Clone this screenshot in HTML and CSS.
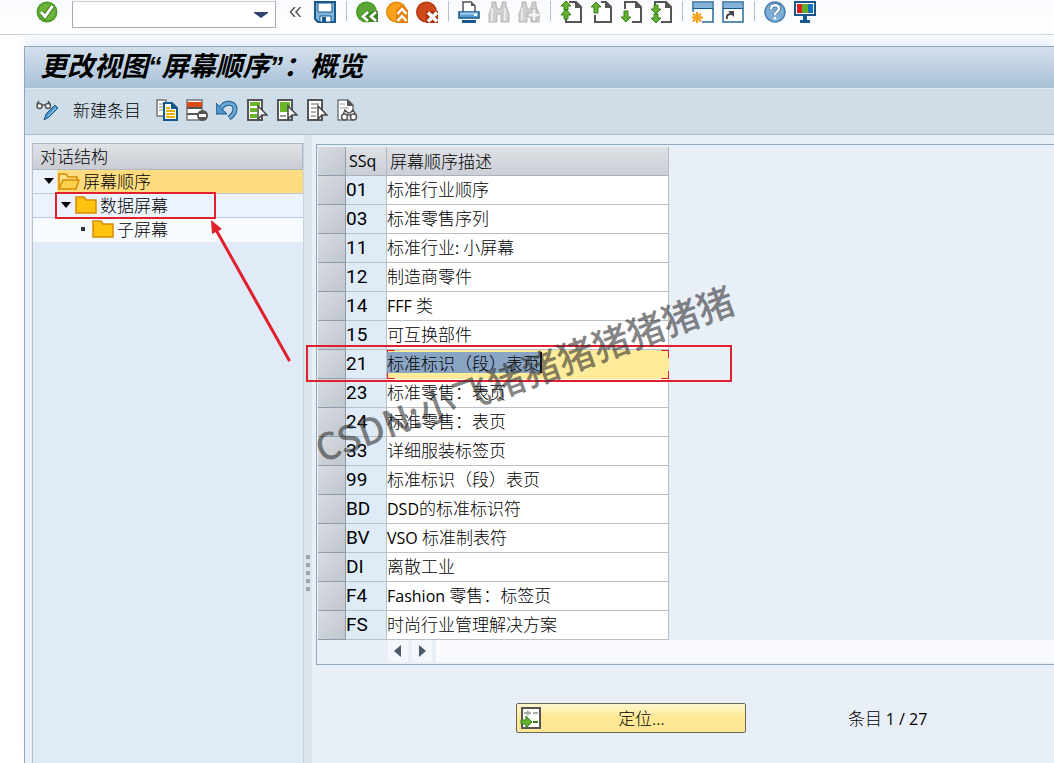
FILE: index.html
```
<!DOCTYPE html>
<html lang="zh-CN">
<head>
    <meta charset="UTF-8">
    <title>更改视图“屏幕顺序”：概览</title>
    <link rel="stylesheet" href="styles.css">
</head>

<body>
<!-- 系统工具栏 -->
<div class="sysbar">
    <button class="icon" aria-label="回车"><svg viewBox="0 0 22 22"><circle cx="11" cy="11" r="10.5" fill="#4f9e2b"/><circle cx="11" cy="11" r="8.5" fill="#6cb43a"/><path d="M5 11l4 4.500L16.500 5" fill="none" stroke="#3f7f22" stroke-width="5"/><path d="M5 11l4 4.500L16.500 5" fill="none" stroke="#fff" stroke-width="3"/></svg></button>
    <div class="command">
        <input type="text" aria-label="命令">
        <button aria-label="历史"><svg viewBox="0 0 14 8"><path d="M0 1h14v1l-7 5-7-5z" fill="#2e4372"/></svg></button>
    </div>
    <button class="fold" aria-label="收起"><svg viewBox="0 0 12 10"><path d="M6 0L1.500 5 6 10M11.500 0L7 5l4.500 5" fill="none" stroke="#555" stroke-width="1.500"/></svg></button>
    <button class="icon" aria-label="保存"><svg viewBox="0 0 22 22"><path d="M1 1h20v20H4l-3-3z" fill="#7fb2dc" stroke="#17588a" stroke-width="2"/><path d="M4 2h14v9H4z" fill="#fff" stroke="#17588a"/><path d="M6 15h11v6H6z" fill="#fff" stroke="#17588a"/><path d="M8 16h4v5H8z" fill="#17588a"/></svg></button>
    <i class="sep"></i>
    <button class="icon" aria-label="返回"><svg viewBox="0 0 22 22"><circle cx="10.500" cy="11" r="10.500" fill="#4c9a2a"/><circle cx="10.500" cy="11" r="9" fill="#5ba535"/><path d="M5 15l6-5v3l5-3h6v11H11z" fill="#3f8423"/><path d="M12 11l-5 4.500 5 4.500M20 11l-5 4.500 5 4.500" fill="none" stroke="#fff" stroke-width="2.500"/></svg></button>
    <button class="icon" aria-label="退出"><svg viewBox="0 0 22 22"><circle cx="10.500" cy="11" r="10.500" fill="#e08a12"/><circle cx="10.500" cy="11" r="9" fill="#f9a11b"/><path d="M10 9l6-5 6 5v13H10z" fill="#e3810c"/><path d="M11.500 13l4.500-5 4.500 5M11.500 20l4.500-5 4.500 5" fill="none" stroke="#fff" stroke-width="2.500"/></svg></button>
    <button class="icon" aria-label="取消"><svg viewBox="0 0 22 22"><circle cx="10.500" cy="11" r="10.500" fill="#b53a12"/><circle cx="10.500" cy="11" r="9" fill="#cf4a1a"/><path d="M10 10h12v12H10z" fill="#a9340f"/><path d="M12 11.500l9 9M21 11.500l-9 9" stroke="#fff" stroke-width="3.500"/></svg></button>
    <i class="sep"></i>
    <button class="icon" aria-label="打印"><svg viewBox="0 0 22 22"><path d="M5 11V1h8l4 4v6" fill="#fff" stroke="#555" stroke-width="1.500"/><path d="M13 1v4h4z" fill="#555"/><path d="M1 11h20v6H1z" fill="#5d9fd0" stroke="#17588a" stroke-width="1.500"/><path d="M2 11.500h18v2H2z" fill="#a9d0ee"/><path d="M16 13h3v2h-3z" fill="#fff"/><path d="M4 19h14v3H4z" fill="#17588a"/></svg></button>
    <button class="icon" aria-label="查找"><svg viewBox="0 0 22 22"><path d="M4 1h4v4h1v3h4V5h1V1h4v4l3 8v8h-8v-8H9v8H1v-8l3-8z" fill="#d0d0d0" stroke="#b4b4b4"/><path d="M4 7v13M17 7v13" stroke="#e9e9e9" stroke-width="2"/></svg></button>
    <button class="icon" aria-label="继续查找"><svg viewBox="0 0 22 22"><path d="M4 1h4v4h1v3h4V5h1V1h4v4l3 8v8h-8v-8H9v8H1v-8l3-8z" fill="#d0d0d0" stroke="#b4b4b4"/><path d="M4 7v13" stroke="#e9e9e9" stroke-width="2"/><path d="M14 8h4v4h4v4h-4v4h-4v-4h-4v-4h4z" fill="#f4f4f4" stroke="#b4b4b4"/></svg></button>
    <i class="sep"></i>
    <button class="icon" aria-label="首页"><svg viewBox="0 0 22 22"><path d="M9 1h7l5 5v15H6v-4" fill="#fff" stroke="#555" stroke-width="2"/><path d="M15 0l7 7h-7z" fill="#555"/><path d="M6 0l5 5H8v4H4V5H1zM6 8l5 6H8v4H4v-4H1z" fill="#62b22f" stroke="#3c7f1c"/></svg></button>
    <button class="icon" aria-label="上一页"><svg viewBox="0 0 22 22"><path d="M11 1h5l5 5v15H5v-7" fill="#fff" stroke="#555" stroke-width="2"/><path d="M15 0l7 7h-7z" fill="#555"/><path d="M6 1l5 5H8v6H4V6H1z" fill="#62b22f" stroke="#3c7f1c"/></svg></button>
    <button class="icon" aria-label="下一页"><svg viewBox="0 0 22 22"><path d="M5 8V1h11l5 5v15h-9" fill="#fff" stroke="#555" stroke-width="2"/><path d="M15 0l7 7h-7z" fill="#555"/><path d="M6 21l5-5H8v-6H4v6H1z" fill="#62b22f" stroke="#3c7f1c"/></svg></button>
    <button class="icon" aria-label="末页"><svg viewBox="0 0 22 22"><path d="M5 4V1h11l5 5v15H11" fill="#fff" stroke="#555" stroke-width="2"/><path d="M15 0l7 7h-7z" fill="#555"/><path d="M6 13l5-5H8V4H4v4H1zM6 22l5-5H8v-4H4v4H1z" fill="#62b22f" stroke="#3c7f1c"/></svg></button>
    <i class="sep"></i>
    <button class="icon" aria-label="新建会话"><svg viewBox="0 0 22 22"><path d="M1 1h20v20H1z" fill="#fff" stroke="#2a6a98" stroke-width="1.500"/><path d="M2 2h18v5H2z" fill="#86b3da"/><path d="M1 7.500h20" stroke="#17588a"/><path d="M0 11h10v11H0z" fill="#fff"/><path d="M5 11v11M0 16.500h11M1 12.500l8 8M9 12.500l-8 8" stroke="#f09a12" stroke-width="2"/><circle cx="5" cy="16.500" r="3" fill="#f5a623"/></svg></button>
    <button class="icon" aria-label="生成快捷方式"><svg viewBox="0 0 22 22"><path d="M1 1h20v20H1z" fill="#fff" stroke="#2a6a98" stroke-width="1.500"/><path d="M2 2h18v5H2z" fill="#86b3da"/><path d="M1 7.500h20" stroke="#17588a"/><path d="M5 18c-1-4 1-5 5-5" fill="none" stroke="#444" stroke-width="2"/><path d="M6 10h6v6z" fill="#444"/></svg></button>
    <i class="sep"></i>
    <button class="icon" aria-label="帮助"><svg viewBox="0 0 22 22"><circle cx="11" cy="11" r="10" fill="#7caed6" stroke="#4a7fae" stroke-width="1.500"/><path d="M7 8c0-5 8-5 8-.500 0 3-4 3-4 6.500" fill="none" stroke="#39668f" stroke-width="4"/><path d="M7 8c0-5 8-5 8-.500 0 3-4 3-4 6.500M11 16v2.500" fill="none" stroke="#fff" stroke-width="2.500"/></svg></button>
    <button class="icon" aria-label="定制本地布局"><svg viewBox="0 0 22 22"><path d="M1 1h20v13H1z" fill="#fff" stroke="#17588a" stroke-width="2"/><path d="M3 3h5v9H3z" fill="#dd1c1c"/><path d="M8 3h6v9H8z" fill="#5fae2c"/><path d="M14 3h5v9h-5z" fill="#1a70c0"/><path d="M9 15h4v4h3v3H6v-3h3z" fill="#17588a"/></svg></button>
</div>

<div class="window">
    <h1 class="title">更改视图“屏幕顺序”：概览</h1>

    <!-- 应用工具栏 -->
    <div class="appbar">
        <button class="icon" aria-label="显示/更改"><svg viewBox="0 0 22 22"><g fill="#fff" stroke="#555" stroke-width="1.500"><circle cx="3.500" cy="7" r="2.500"/><circle cx="12" cy="7" r="2.500"/><path d="M1 5l2-3M6 6h3M14 5l-2-3" fill="none"/></g><path d="M8 21l2-6 9-9 3 3-9 9z" fill="#4f93c8" stroke="#17588a"/><path d="M12 17l8-8" stroke="#a9d0ee"/></svg></button>
        <button class="text">新建条目</button>
        <button class="icon" aria-label="复制为"><svg viewBox="0 0 22 22"><path d="M1 1h9v16H1z" fill="#fff" stroke="#777" stroke-width="1.500"/><path d="M3 5h4M3 8h4M3 11h4" stroke="#888"/><path d="M8 4h8l5 5v12H8z" fill="#fff" stroke="#17588a" stroke-width="2"/><path d="M15 3l7 7h-7z" fill="#17588a"/><path d="M10 9h4M10 12h9M10 15h9M10 18h9" stroke="#f0b400" stroke-width="2"/></svg></button>
        <button class="icon" aria-label="删除"><svg viewBox="0 0 22 22"><path d="M1 1h15v20H1z" fill="#fff" stroke="#777" stroke-width="1.500"/><path d="M1 3h15v5H1z" fill="#dc4a17"/><path d="M1 9h15M1 15h15" stroke="#555" stroke-width="2"/><circle cx="16.500" cy="16.500" r="5.500" fill="#555"/><path d="M13 15h7v3h-7z" fill="#fff"/></svg></button>
        <button class="icon" aria-label="撤消"><svg viewBox="0 0 22 22"><path d="M5 9c4-7 14-6 14 1 0 4-3 7-6 9" fill="none" stroke="#17588a" stroke-width="5"/><path d="M0 4v11h11z" fill="#4f93c8" stroke="#17588a"/><path d="M5 9c4-7 14-6 14 1 0 4-3 7-6 9" fill="none" stroke="#6aa9d8" stroke-width="3"/></svg></button>
        <button class="icon" aria-label="全选"><svg viewBox="0 0 22 22"><path d="M2 1h14v20H2z" fill="#fff" stroke="#555" stroke-width="2"/><path d="M4 3h10v4H4zM4 9h7v4H4zM4 15h7v4H4z" fill="#6cb52d"/><path d="M12 7l9 9h-5l-4 4z" fill="#fff" stroke="#444" stroke-width="1.500"/></svg></button>
        <button class="icon" aria-label="选择块"><svg viewBox="0 0 22 22"><path d="M2 1h14v20H2z" fill="#fff" stroke="#555" stroke-width="2"/><path d="M4 3h10v10H4z" fill="#6cb52d"/><path d="M4 17h6" stroke="#999" stroke-width="2"/><path d="M12 7l9 9h-5l-4 4z" fill="#fff" stroke="#444" stroke-width="1.500"/></svg></button>
        <button class="icon" aria-label="取消全选"><svg viewBox="0 0 22 22"><path d="M2 1h14v20H2z" fill="#fff" stroke="#555" stroke-width="2"/><path d="M5 5h8M5 9h6M5 13h5M5 17h5" stroke="#999" stroke-width="1.500"/><path d="M12 7l9 9h-5l-4 4z" fill="#fff" stroke="#444" stroke-width="1.500"/></svg></button>
        <button class="icon" aria-label="打印字段"><svg viewBox="0 0 22 22"><path d="M2 21V1h10l5 5v15z" fill="#fff" stroke="#777" stroke-width="1.500"/><path d="M11 0l7 7h-7z" fill="#555"/><path d="M4 5h5M4 9h9" stroke="#999"/><g fill="#fff" stroke="#555" stroke-width="1.500"><path d="M7 16l2-5 3 3h2l3-3 3 5z"/><circle cx="8.500" cy="18" r="3"/><circle cx="17.500" cy="18" r="3"/></g></svg></button>
    </div>

    <div class="content">
        <!-- 对话结构树 -->
        <div class="tree">
            <div class="tree-head">对话结构</div>
            <div class="node current">
                <i class="open"></i>
                <a href="#"><svg class="folder" viewBox="0 0 22 18"><path d="M1 17V2h7l2 3h9v3" fill="#ffe08a" stroke="#d98a00" stroke-width="1.500"/><path d="M1 17L5 8h16l-3 9z" fill="#ffcf4d" stroke="#d98a00" stroke-width="1.500"/></svg>屏幕顺序</a>
            </div>
            <div class="node level2">
                <i class="open"></i>
                <a href="#"><svg class="folder" viewBox="0 0 22 18"><path d="M1 1h8l2 3h10v13H1z" fill="#ffc20e" stroke="#d98a00" stroke-width="1.500"/></svg>数据屏幕</a>
            </div>
            <div class="node level3">
                <i class="leaf"></i>
                <a href="#"><svg class="folder" viewBox="0 0 22 18"><path d="M1 1h8l2 3h10v13H1z" fill="#ffc20e" stroke="#d98a00" stroke-width="1.500"/></svg>子屏幕</a>
            </div>
        </div>

        <div class="splitter"><i></i><i></i><i></i><i></i><i></i></div>

        <div class="main">
            <div class="panel">
                <table>
                    <thead>
                    <tr><th class="pick"><button aria-label="全选"></button></th><th class="latin">SSq</th><th>屏幕顺序描述</th></tr>
                    </thead>
                    <tbody>
                    <tr><td class="pick"><button aria-label="选择 01"></button></td><td class="code">01</td><td>标准行业顺序</td></tr>
                    <tr><td class="pick"><button aria-label="选择 03"></button></td><td class="code">03</td><td>标准零售序列</td></tr>
                    <tr><td class="pick"><button aria-label="选择 11"></button></td><td class="code">11</td><td>标准行业<span class="latin">: </span>小屏幕</td></tr>
                    <tr><td class="pick"><button aria-label="选择 12"></button></td><td class="code">12</td><td>制造商零件</td></tr>
                    <tr><td class="pick"><button aria-label="选择 14"></button></td><td class="code">14</td><td><span class="latin">FFF </span>类</td></tr>
                    <tr><td class="pick"><button aria-label="选择 15"></button></td><td class="code">15</td><td>可互换部件</td></tr>
                    <tr><td class="pick"><button aria-label="选择 21"></button></td><td class="code">21</td><td class="focus"><span class="selected">标准标识（段）表页</span></td></tr>
                    <tr><td class="pick"><button aria-label="选择 23"></button></td><td class="code">23</td><td>标准零售：表页</td></tr>
                    <tr><td class="pick"><button aria-label="选择 24"></button></td><td class="code">24</td><td>标准零售：表页</td></tr>
                    <tr><td class="pick"><button aria-label="选择 33"></button></td><td class="code">33</td><td>详细服装标签页</td></tr>
                    <tr><td class="pick"><button aria-label="选择 99"></button></td><td class="code">99</td><td>标准标识（段）表页</td></tr>
                    <tr><td class="pick"><button aria-label="选择 BD"></button></td><td class="code">BD</td><td><span class="latin">DSD</span>的标准标识符</td></tr>
                    <tr><td class="pick"><button aria-label="选择 BV"></button></td><td class="code">BV</td><td><span class="latin">VSO </span>标准制表符</td></tr>
                    <tr><td class="pick"><button aria-label="选择 DI"></button></td><td class="code">DI</td><td>离散工业</td></tr>
                    <tr><td class="pick"><button aria-label="选择 F4"></button></td><td class="code">F4</td><td><span class="latin">Fashion </span>零售：标签页</td></tr>
                    <tr><td class="pick"><button aria-label="选择 FS"></button></td><td class="code">FS</td><td>时尚行业管理解决方案</td></tr>
                    </tbody>
                </table>
                <div class="scroll">
                    <button aria-label="向左"><svg viewBox="0 0 8 12"><path d="M7 0v12L0 6z" fill="#4a5a6c"/></svg></button>
                    <button aria-label="向右"><svg viewBox="0 0 8 12"><path d="M1 0v12l7-6z" fill="#4a5a6c"/></svg></button>
                    <div class="track"></div>
                </div>
            </div>
            <div class="footer">
                <button class="locate"><svg viewBox="0 0 22 22"><path d="M2 1h18v20H2z" fill="#fff" stroke="#555" stroke-width="2"/><path d="M4 6h7M13 6h5" stroke="#aaa" stroke-width="2"/><path d="M7 3l4 3-4 3z" fill="#aaa"/><path d="M13 15h5" stroke="#3c7f1c" stroke-width="2"/><path d="M1 13h5v-4l6 6-6 6v-4H1z" fill="#62b22f" stroke="#3c7f1c"/></svg><span>定位...</span></button>
                <div class="entries">条目 <span class="latin">1 / 27</span></div>
            </div>
        </div>
    </div>
</div>

<!-- 标注 -->
<svg class="marks" width="760" height="400">
    <g fill="none" stroke="#e0202c" stroke-width="2">
        <rect x="56" y="193" width="159" height="25"/>
        <rect x="307" y="346" width="424" height="35"/>
        <path d="M289 360L215 228" stroke-width="3" stroke-linecap="round"/>
    </g>
    <path d="M211 220l11 9-10 5z" fill="#e0202c"/>
</svg>
<div class="watermark">CSDN:小飞猪猪猪猪猪猪猪</div>
</body>
</html>
```

FILE: styles.css
```
*{
    margin: 0;
    padding: 0;
    box-sizing: border-box;
}
body{
    min-height: 100vh;
    display: flex;
    flex-direction: column;
    position: relative;
    overflow: hidden;
    background: #fff;
    color: #000;
    font: 300 17px/24px "Noto Sans CJK SC", sans-serif;
}
button{
    border: none;
    background: none;
    font: inherit;
    color: inherit;
    cursor: pointer;
}
svg{
    display: block;
}
a{
    color: inherit;
    text-decoration: none;
}
.latin{
    font-family: "Open Sans", "Noto Sans", sans-serif;
    font-size: 16px;
    font-weight: 400;
}
.icon,
.icon svg{
    width: 22px;
    height: 22px;
    flex: none;
}

/* 系统工具栏 */
.sysbar{
    height: 35px;
    padding: 1px 0 0 36px;
    display: flex;
    align-items: flex-start;
    gap: 8px;
    border-bottom: 1px solid #c9ccd4;
    background: linear-gradient(#f8fafd, #fff);
}
.command{
    width: 204px;
    height: 27px;
    margin-left: 6px;
    display: flex;
    border: 1px solid #a5a9b0;
    border-top-color: #c8ccd2;
    background: #fff;
}
.command input{
    flex: 1;
    min-width: 0;
    padding: 0 4px;
    border: none;
    outline: none;
    font: inherit;
}
.command button{
    width: 28px;
    padding: 0 7px;
}
.fold{
    width: 12px;
    height: 22px;
    margin: 0 5px;
}
.sep{
    width: 4px;
    height: 20px;
    flex: none;
    background: linear-gradient(#b4c0d2, #b4c0d2) center / 1px 100% no-repeat;
}

/* 窗口 */
.window{
    flex: 1;
    margin: 11px 0 0 24px;
    display: flex;
    flex-direction: column;
    border: 1px solid #8fa6bd;
    border-width: 1px 0 0 1px;
    background: #e8eff7;
    box-shadow: 0 -10px 10px #edf2fa;
}
.title{
    height: 42px;
    padding-left: 15px;
    border-bottom: 1px solid #dde7f0;
    background: linear-gradient(#d3e0eb, #a9c1d8);
    font: italic bold 27px/40px "Liberation Sans", "Noto Sans CJK SC", sans-serif;
}
.appbar{
    height: 46px;
    padding: 0 11px 4px;
    display: flex;
    align-items: center;
    gap: 8px;
    border-bottom: 1px solid #aebdcb;
    background: #cfdde9;
}
.appbar .text{
    margin: 0 7px;
}
.content{
    flex: 1;
    display: flex;
}

/* 树 */
.tree{
    width: 272px;
    flex: none;
    margin: 8px 0 0 7px;
    border-left: 1px solid #b4c2d0;
    border-right: 1px solid #c5d2df;
    background: #e0ebf7;
}
.tree-head{
    height: 27px;
    padding-left: 7px;
    border: 1px solid #b0b7c0;
    border-left: none;
    background: linear-gradient(#dfe2e6, #c9cdd3);
}
.node{
    height: 24px;
    padding: 0 0 2px 11px;
    display: flex;
    align-items: center;
    gap: 4px;
    border-bottom: 1px solid #b9c9d8;
    background: #edf3fc;
}
.node a{
    display: flex;
    align-items: center;
    gap: 3px;
}
.node.current{
    background: linear-gradient(to right, #edf3fc 24px, #ffdc80 24px);
}
.node.level2{
    padding-left: 28px;
}
.node.level3{
    padding-left: 45px;
    border-bottom: none;
    background: #f7faff;
}
.folder{
    width: 22px;
    height: 18px;
}
.open{
    width: 10px;
    border: 5px solid transparent;
    border-top: 6px solid #000;
    border-bottom: none;
}
.leaf{
    width: 4px;
    height: 4px;
    margin: 0 3px;
    background: #333;
}

.splitter{
    width: 8px;
    margin-right: 4px;
    padding: 248px 0 0 2px;
    display: flex;
    flex-direction: column;
    justify-content: center;
    gap: 4px;
    background: #dce5ec;
}
.splitter i{
    width: 4px;
    height: 4px;
    background: #98a3ad;
}

/* 表格 */
.main{
    flex: 1;
    min-width: 0;
    padding-top: 9px;
}
.panel{
    padding: 2px 0 2px 1px;
    border: 1px solid #93a9be;
    border-right: none;
}
table{
    width: 351px;
    table-layout: fixed;
    border-collapse: separate;
    border-spacing: 0;
}
th{
    height: 29px;
    padding-left: 3px;
    border-right: 1px solid #b3b9c1;
    border-bottom: 1px solid #a9b0ba;
    background: linear-gradient(#dde0e5, #cbcfd6);
    text-align: left;
    font-weight: inherit;
}
th.latin{
    width: 41px;
}
td{
    height: 29px;
    padding: 0 0 2px;
    border-right: 1px solid #b9c0c8;
    border-bottom: 1px solid #b9c0c8;
    background: #fff;
}
td .latin{
    line-height: 20px;
}
.pick{
    width: 28px;
    padding: 0;
    border-color: #8e9bac;
    background: linear-gradient(135deg, #d9dce1, #c0c6ce);
}
.pick button{
    width: 27px;
    height: 28px;
    display: block;
}
.code{
    padding-bottom: 0;
    background: #dfebf6;
    font: 400 19px/28px Roboto, sans-serif;
}
.focus{
    border-color: transparent;
    background:
        linear-gradient(#e0202c, #e0202c) 0 0 / 8px 1px,
        linear-gradient(#e0202c, #e0202c) 0 0 / 1px 8px,
        linear-gradient(#e0202c, #e0202c) 100% 0 / 8px 1px,
        linear-gradient(#e0202c, #e0202c) 100% 0 / 1px 8px,
        linear-gradient(#e0202c, #e0202c) 0 100% / 8px 1px,
        linear-gradient(#e0202c, #e0202c) 0 100% / 1px 8px,
        linear-gradient(#e0202c, #e0202c) 100% 100% / 8px 1px,
        linear-gradient(#e0202c, #e0202c) 100% 100% / 1px 8px,
        #ffec9a;
    background-repeat: no-repeat;
    background-origin: border-box;
}
.selected{
    display: inline-block;
    border-right: 2px solid #000;
    background: #8aa5c4;
    line-height: 21px;
}
.scroll{
    height: 22px;
    padding-left: 70px;
    display: flex;
    gap: 4px;
}
.scroll button{
    width: 20px;
    padding: 0 6px;
    background: #f3f6fb;
}
.track{
    flex: 1;
    background: #f9fafd;
}

.footer{
    padding: 38px 0 0 200px;
    display: flex;
    align-items: center;
    gap: 102px;
}
.locate{
    width: 230px;
    height: 30px;
    padding: 0 4px 0 3px;
    display: flex;
    align-items: center;
    border: 1px solid #6b675a;
    border-radius: 2px;
    background: linear-gradient(#fff6cf, #ffe995 50%, #fbe796);
}
.locate svg{
    width: 22px;
    height: 22px;
}
.locate span{
    flex: 1;
}

/* 标注和水印 */
.marks{
    position: absolute;
    top: 0;
    left: 0;
    pointer-events: none;
}
.watermark{
    position: absolute;
    top: 428px;
    left: 316px;
    transform: rotate(-20deg);
    transform-origin: 0 50%;
    color: rgba(50, 50, 50, 0.6);
    font: 500 37px/40px "Noto Sans CJK SC", sans-serif;
    white-space: nowrap;
    pointer-events: none;
}
```
